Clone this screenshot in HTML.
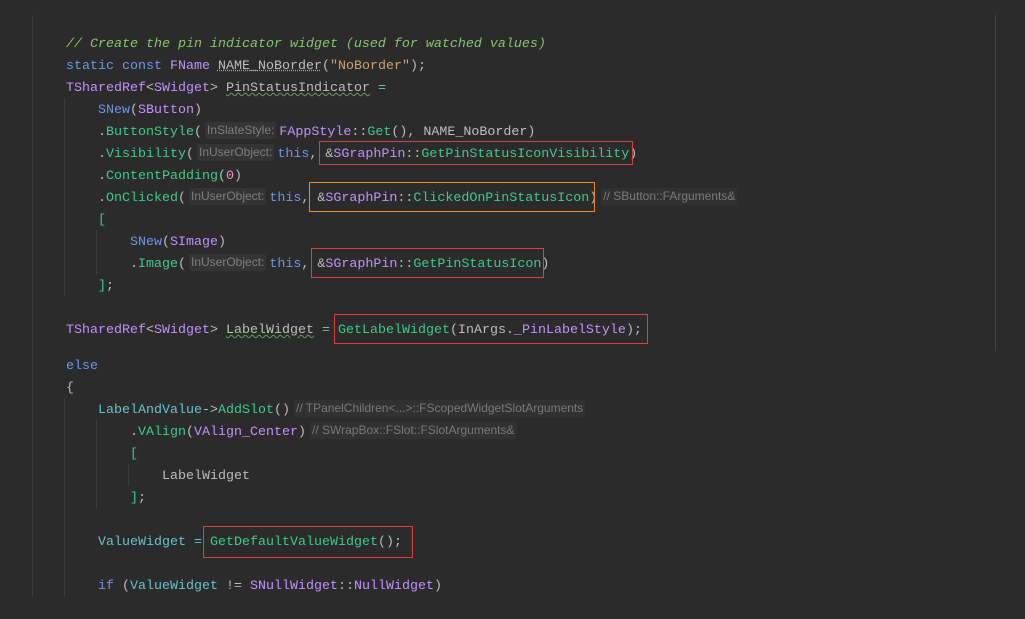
<!DOCTYPE html>
<html><head><meta charset="utf-8"><style>
html,body{margin:0;padding:0;background:#2b2b2b;width:1025px;height:619px;overflow:hidden;position:relative;font-family:"Liberation Mono",monospace;}
.l{position:absolute;height:22px;line-height:22px;font-size:13.33px;white-space:pre;color:#bdbdbd;margin-top:2px}
.k{color:#6c95eb}.t{color:#c191ff}.f{color:#39cc8f}.s{color:#c9a26d}.c{color:#85c46c;font-style:italic}.v{color:#66c3cc}.n{color:#ed94c0}.p{color:#bdbdbd}
.h{display:inline-block;font-family:"Liberation Sans",sans-serif;font-size:12px;color:#7f7f7f;background:#343434;line-height:17px;padding:0 2px;margin:0 3px 0 3px;vertical-align:1px;border-radius:2px}
.hc{display:inline-block;font-family:"Liberation Sans",sans-serif;font-size:12px;color:#7a7a7a;background:#313131;line-height:17px;padding:0 2px;margin-left:4px;vertical-align:1px}
.g{position:absolute;width:1px;background:#3d3d3d}
.b{position:absolute;border:1px solid #e0403a;box-sizing:border-box}
</style></head><body>
<div class="g" style="left:32px;top:15px;height:582px"></div>
<div class="g" style="left:995px;top:15px;height:336px;background:#444"></div>
<div class="g" style="left:64px;top:98px;height:198px"></div>
<div class="g" style="left:96px;top:230px;height:45px"></div>
<div class="g" style="left:64px;top:398px;height:199px"></div>
<div class="g" style="left:96px;top:420px;height:88px"></div>
<div class="g" style="left:128px;top:464px;height:22px"></div>

<div class="l" style="left:66px;top:32px"><span class="c">// Create the pin indicator widget (used for watched values)</span></div>
<div class="l" style="left:66px;top:54px"><span class="k">static const </span><span class="t">FName </span><span class="p" style="text-decoration:underline dotted #8cc265">NAME_NoBorder</span>(<span class="s">"NoBorder"</span>);</div>
<div class="l" style="left:66px;top:76px"><span class="t">TSharedRef</span>&lt;<span class="t">SWidget</span>&gt; <span style="text-decoration:underline wavy #6a9955;text-decoration-thickness:1px">PinStatusIndicator</span> <span class="v">=</span></div>
<div class="l" style="left:98px;top:98px"><span class="k">SNew</span>(<span class="t">SButton</span>)</div>
<div class="l" style="left:98px;top:120px">.<span class="f">ButtonStyle</span>(<span class="h">InSlateStyle:</span><span class="t">FAppStyle</span>::<span class="f">Get</span>(), NAME_NoBorder)</div>
<div class="l" style="left:98px;top:142px">.<span class="f">Visibility</span>(<span class="h">InUserObject:</span><span class="k">this</span>, &amp;<span class="t">SGraphPin</span>::<span class="f">GetPinStatusIconVisibility</span>)</div>
<div class="l" style="left:98px;top:164px">.<span class="f">ContentPadding</span>(<span class="n">0</span>)</div>
<div class="l" style="left:98px;top:186px">.<span class="f">OnClicked</span>(<span class="h">InUserObject:</span><span class="k">this</span>, &amp;<span class="t">SGraphPin</span>::<span class="f">ClickedOnPinStatusIcon</span>)<span class="hc">// SButton::FArguments&amp;</span></div>
<div class="l" style="left:98px;top:208px"><span class="f">[</span></div>
<div class="l" style="left:130px;top:230px"><span class="k">SNew</span>(<span class="t">SImage</span>)</div>
<div class="l" style="left:130px;top:252px">.<span class="f">Image</span>(<span class="h">InUserObject:</span><span class="k">this</span>, &amp;<span class="t">SGraphPin</span>::<span class="f">GetPinStatusIcon</span>)</div>
<div class="l" style="left:98px;top:274px"><span class="f">]</span>;</div>
<div class="l" style="left:66px;top:318px"><span class="t">TSharedRef</span>&lt;<span class="t">SWidget</span>&gt; <span style="text-decoration:underline wavy #6a9955;text-decoration-thickness:1px">LabelWidget</span> <span class="v">=</span> <span class="f">GetLabelWidget</span>(InArgs.<span class="t">_PinLabelStyle</span>);</div>
<div class="l" style="left:66px;top:354px"><span class="k">else</span></div>
<div class="l" style="left:66px;top:376px">{</div>
<div class="l" style="left:98px;top:398px"><span class="v">LabelAndValue</span>-&gt;<span class="f">AddSlot</span>()<span class="hc">// TPanelChildren&lt;...&gt;::FScopedWidgetSlotArguments</span></div>
<div class="l" style="left:130px;top:420px">.<span class="f">VAlign</span>(<span class="t">VAlign_Center</span>)<span class="hc">// SWrapBox::FSlot::FSlotArguments&amp;</span></div>
<div class="l" style="left:130px;top:442px"><span class="f">[</span></div>
<div class="l" style="left:162px;top:464px">LabelWidget</div>
<div class="l" style="left:130px;top:486px"><span class="f">]</span>;</div>
<div class="l" style="left:98px;top:530px"><span class="v">ValueWidget</span> <span class="v">=</span> <span class="f">GetDefaultValueWidget</span>();</div>
<div class="l" style="left:98px;top:574px"><span class="k">if</span> (<span class="v">ValueWidget</span> != <span class="t">SNullWidget</span>::<span class="t">NullWidget</span>)</div>

<div class="b" style="left:319px;top:141px;width:314px;height:24px;border-color:#c44"></div>
<div class="b" style="left:309px;top:182px;width:286px;height:30px;border-color:#e8892f"></div>
<div class="b" style="left:311px;top:248px;width:233px;height:30px"></div>
<div class="b" style="left:334px;top:314px;width:314px;height:30px"></div>
<div class="b" style="left:203px;top:526px;width:210px;height:32px"></div>
</body></html>
